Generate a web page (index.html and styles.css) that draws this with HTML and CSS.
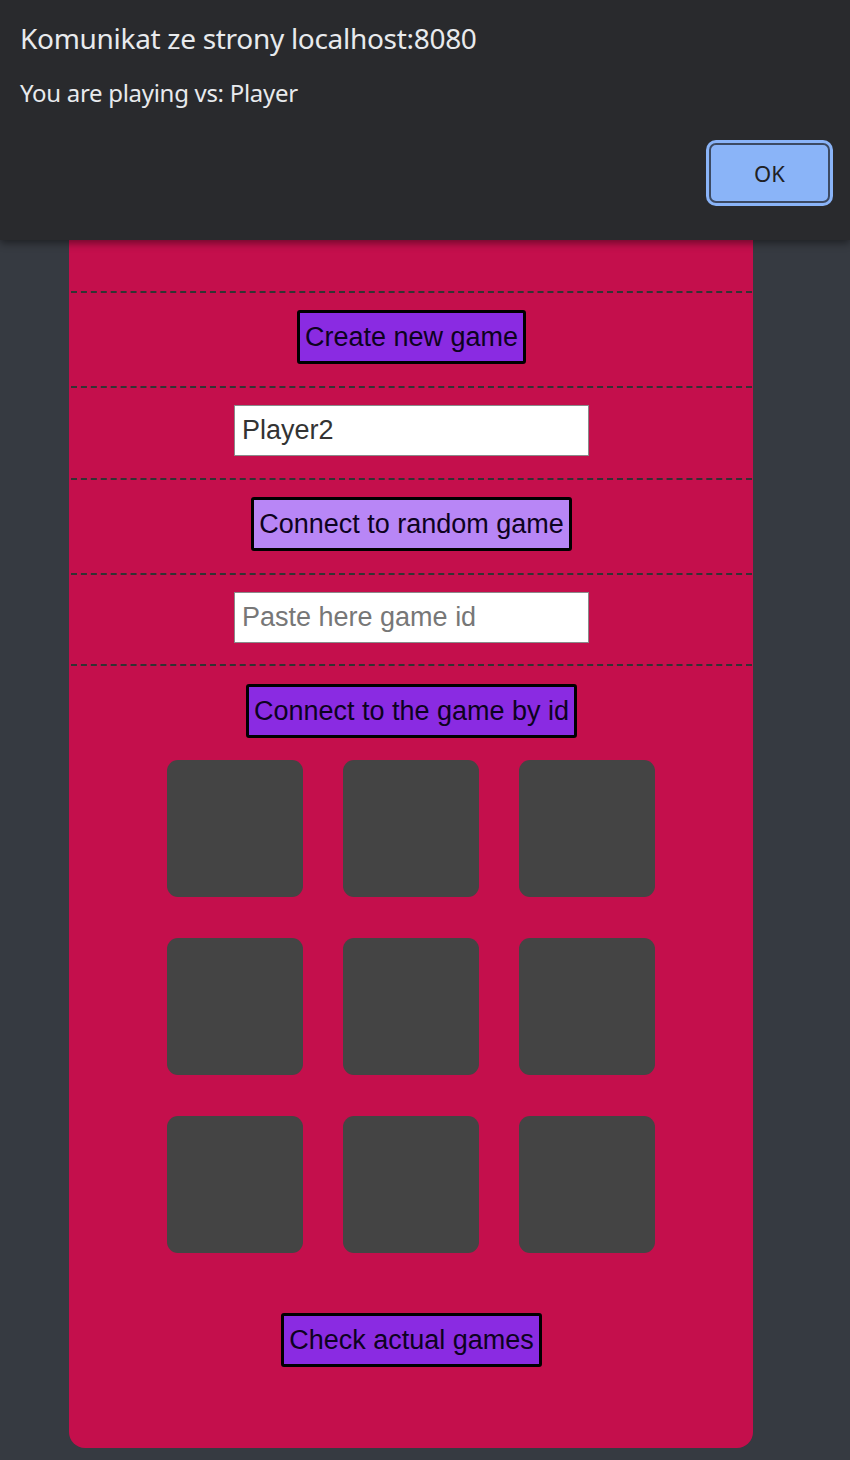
FILE: index.html
```html
<!DOCTYPE html>
<html lang="en">
<head>
    <meta charset="UTF-8">
    <meta name="viewport" content="width=device-width, initial-scale=1.0">
    <title>Tic Tac Toe</title>
    <link rel="stylesheet" href="styles.css">
</head>
<body>
    <div class="card">
        <div class="section">
            <button class="btn" id="create">Create new game</button>
        </div>
        <div class="section">
            <input class="field" type="text" id="login" value="Player2">
        </div>
        <div class="section">
            <button class="btn btn-light" id="random">Connect to random game</button>
        </div>
        <div class="section">
            <input class="field" type="text" id="game_id" placeholder="Paste here game id">
        </div>
        <div class="section section-last">
            <button class="btn" id="connect">Connect to the game by id</button>
            <div class="board">
                <div class="cell"></div>
                <div class="cell"></div>
                <div class="cell"></div>
                <div class="cell"></div>
                <div class="cell"></div>
                <div class="cell"></div>
                <div class="cell"></div>
                <div class="cell"></div>
                <div class="cell"></div>
            </div>
            <button class="btn" id="games">Check actual games</button>
        </div>
    </div>

    <div class="dialog">
        <div class="dialog-title">Komunikat ze strony localhost:8080</div>
        <div class="dialog-text">You are playing vs: Player</div>
        <div class="dialog-actions">
            <button class="dialog-ok">OK</button>
        </div>
    </div>
</body>
</html>
```

FILE: styles.css
```css
* { box-sizing: border-box; margin: 0; padding: 0; }
body {
    background: #363a41;
    font-family: "Liberation Sans", Arial, sans-serif;
    min-height: 1460px;
}
.card {
    width: 684px;
    margin-left: 69px;
    padding: 291px 1px 0 2px;
    background: #c40f4c;
    border-radius: 0 0 16px 16px;
    height: 1448px;
}
.section {
    border-top: 2px dashed #333;
    display: flex;
    flex-direction: column;
    align-items: center;
    padding: 17px 0 22px;
}
.section:nth-child(4) { padding-bottom: 21px; }
.section-last { padding-top: 18px; }
.btn {
    font-family: "Liberation Sans", Arial, sans-serif;
    font-size: 27px;
    line-height: 32px;
    color: #0d0220;
    background: #8a2be2;
    border: 3px solid #000;
    border-radius: 3px;
    padding: 8px 5px;
    cursor: pointer;
}
.btn-light { background: #b886f6; }
.field {
    width: 355px;
    height: 51px;
    font-family: "Liberation Sans", Arial, sans-serif;
    font-size: 27px;
    color: #333;
    background: #fff;
    border: 1px solid #8a8a8a;
    padding: 0 7px;
}
.field::placeholder { color: #777; }
.board {
    display: grid;
    grid-template-columns: repeat(3, 136px);
    grid-auto-rows: 137px;
    column-gap: 40px;
    row-gap: 41px;
    margin: 22px 0 60px;
    padding-right: 1px;
}
.cell {
    background: #444;
    border-radius: 11px;
}
.dialog {
    position: absolute;
    top: 0;
    left: 0;
    right: 0;
    height: 240px;
    background: #292a2d;
    box-shadow: 0 3px 8px rgba(0,0,0,0.45);
    padding: 19px 20px 0 20px;
    font-family: "Noto Sans", "Open Sans", sans-serif;
    color: #e8eaed;
}
.dialog-title {
    font-size: 28px;
    line-height: 38px;
    letter-spacing: -0.3px;
}
.dialog-text {
    font-size: 24px;
    line-height: 32px;
    margin-top: 20px;
    letter-spacing: -0.3px;
}
.dialog-actions {
    display: flex;
    justify-content: flex-end;
    margin-top: 34px;
}
.dialog-ok {
    width: 121px;
    height: 60px;
    background: #8ab4f8;
    color: #202124;
    font-family: "Noto Sans", "Open Sans", sans-serif;
    font-size: 22px;
    border: 2px solid #3c4a63;
    border-radius: 7px;
    box-shadow: 0 0 0 3px #8ab4f8;
    cursor: pointer;
}
```
